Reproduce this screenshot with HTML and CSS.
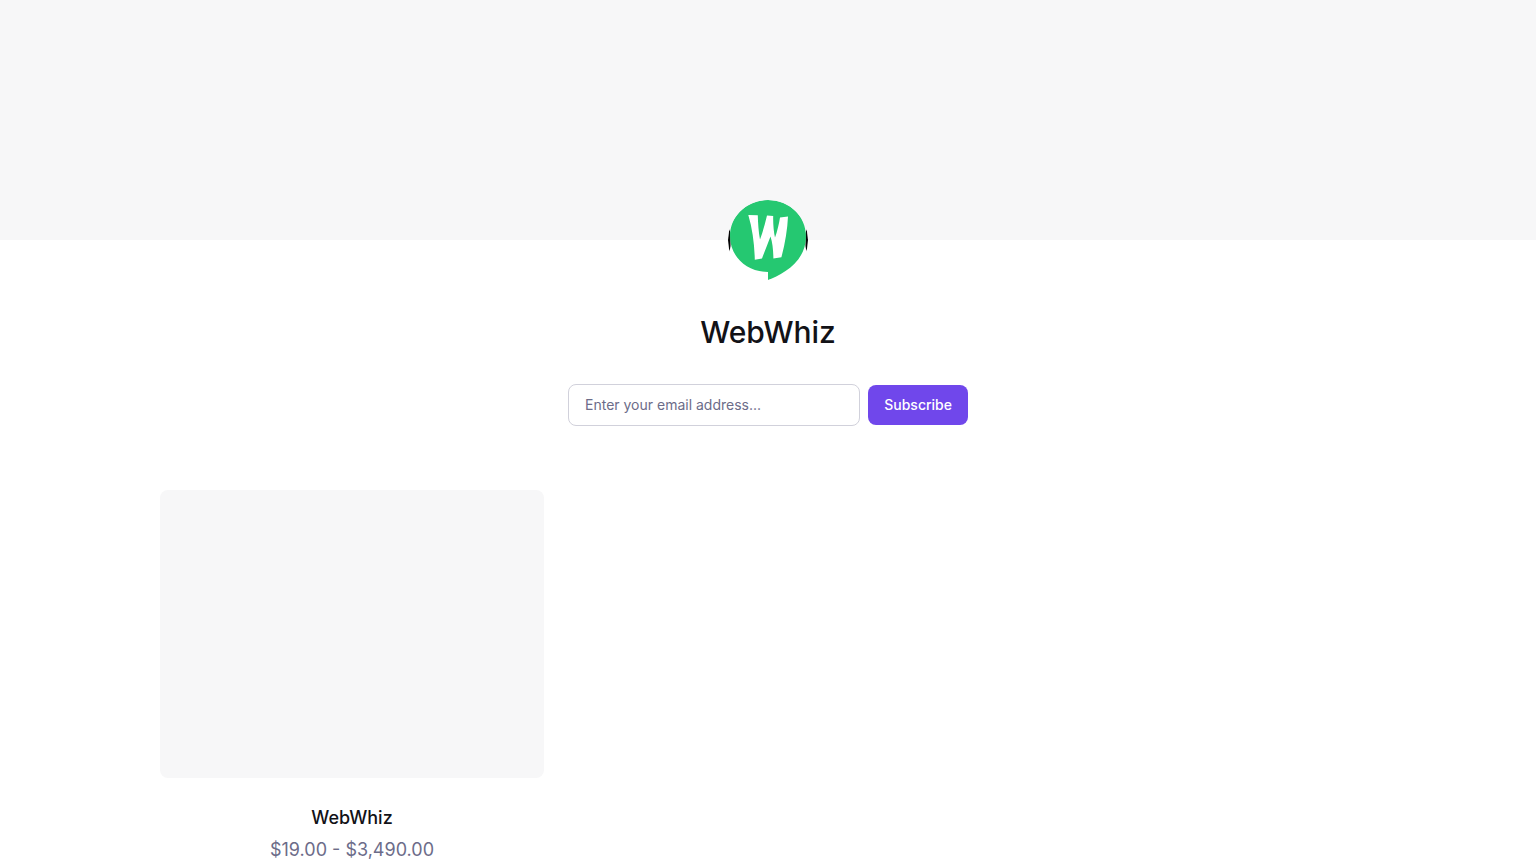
FILE: index.html
```html
<!DOCTYPE html>
<html lang="en">
<head>
    <meta charset="UTF-8">
    <meta name="viewport" content="width=device-width, initial-scale=1.0">
    <title>WebWhiz</title>
    <link rel="stylesheet" href="styles.css">
</head>
<body>
    <div class="cover"></div>

    <header class="store-header">
        <svg class="avatar" viewBox="0 0 80 80" role="img" aria-label="WebWhiz logo">
            <!-- dark slivers at both sides of the bubble -->
            <path fill="#050505" d="M1.5 29C-.5 35-.5 45 1.5 52L2.5 46V34ZM78.5 29C80.5 35 80.5 45 78.5 52L77.5 46V34Z"/>
            <path fill="#25c871" d="M40 0C19 0 2 16 2 36C2 57 19 72 40 72V80C53 75 78 63 78 36C78 16 61 0 40 0Z"/>
            <path fill="#fff" d="M20.3 15L29.8 15.2C30 23 30.6 32 32 39.5C34.8 32 37 24 39 15.6L45.2 16C45 23 45.6 31 47 37.5C49.3 31 51 24 52 17.4L60 16.4C59.5 29 57 44 53.4 57.2L45.4 58.4C45.2 50 44.6 43 42.5 36.5C40 43 36.8 51 34 58.5L26.8 59.8C26.4 44 24.5 29 20.3 15Z"/>
        </svg>
        <h1>WebWhiz</h1>

        <form class="subscribe">
            <input type="email" class="email" placeholder="Enter your email address..." aria-label="Email address">
            <button type="submit" class="btn">Subscribe</button>
        </form>
    </header>

    <main class="products">
        <a class="product" href="#">
            <div class="thumb"></div>
            <h2>WebWhiz</h2>
            <p class="price">$19.00 - $3,490.00</p>
        </a>
    </main>
</body>
</html>
```

FILE: styles.css
```css
* {
    margin: 0;
    padding: 0;
    box-sizing: border-box;
}

body {
    font-family: Inter, sans-serif;
    background: #ffffff;
    color: #121217;
}

.cover {
    height: 240px;
    background: #f7f7f8;
}

.store-header {
    display: flex;
    flex-direction: column;
    align-items: center;
    margin-top: -40px;
    padding: 0 16px;
}

.avatar {
    width: 80px;
    height: 80px;
    border-radius: 50%;
}

h1 {
    margin-top: 32px;
    font-size: 30px;
    font-weight: 500;
    line-height: 40px;
}

.subscribe {
    display: flex;
    align-items: center;
    gap: 8px;
    width: 100%;
    max-width: 400px;
    margin-top: 32px;
}

.email {
    flex: 1;
    min-width: 0;
    padding: 10px 16px;
    border: 1px solid #d1d1db;
    border-radius: 8px;
    background: #ffffff;
    color: #121217;
    font-family: inherit;
    font-size: 14px;
    line-height: 20px;
}

.email::placeholder {
    color: #6c6c89;
}

.btn {
    padding: 10px 16px;
    border: none;
    border-radius: 8px;
    background: #7047eb;
    color: #ffffff;
    font-family: inherit;
    font-size: 14px;
    font-weight: 500;
    line-height: 20px;
    cursor: pointer;
}

.products {
    display: grid;
    grid-template-columns: repeat(3, 1fr);
    gap: 32px;
    max-width: 1280px;
    margin: 0 auto;
    padding: 64px 32px;
}

.product {
    color: inherit;
    text-align: center;
    text-decoration: none;
}

.thumb {
    aspect-ratio: 4 / 3;
    border-radius: 8px;
    background: #f7f7f8;
}

h2 {
    margin-top: 26px;
    font-size: 18px;
    font-weight: 500;
    line-height: 28px;
}

.price {
    margin-top: 4px;
    color: #6c6c89;
    font-size: 18px;
    line-height: 28px;
}
```
